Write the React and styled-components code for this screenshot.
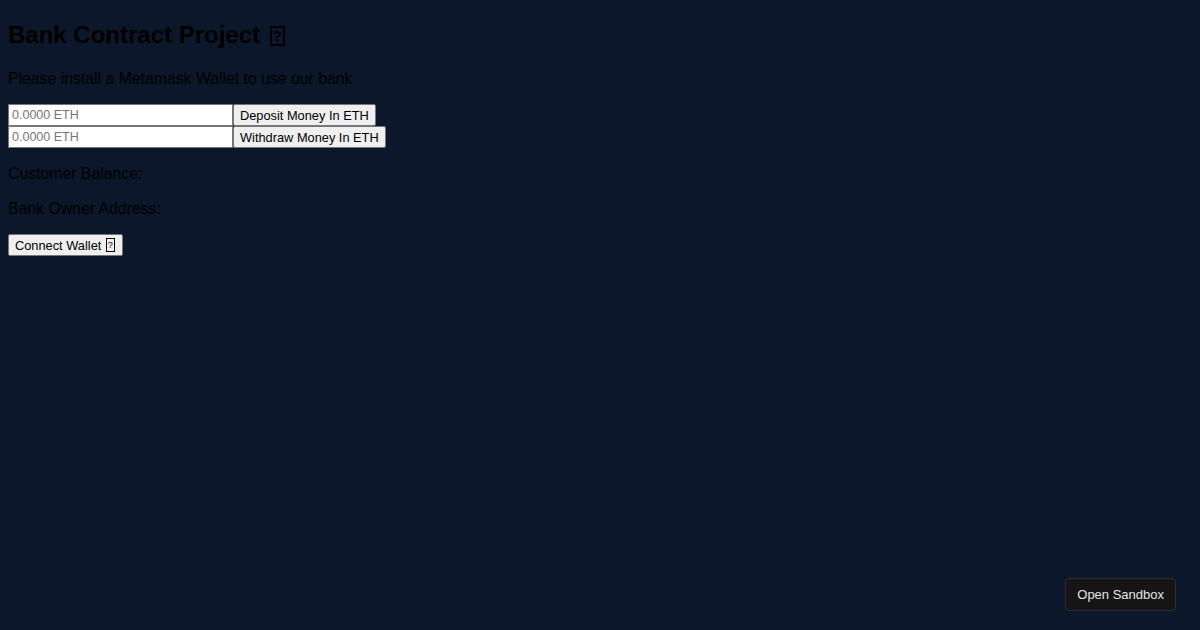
import React from 'react';
import styled, { createGlobalStyle } from 'styled-components';

const Global = createGlobalStyle`
  html, body {
    background: #0c172b;
  }
  body {
    margin: 0;
    padding: 0 8px;
    font-family: 'Liberation Sans', Arial, sans-serif;
    color: #000;
  }
`;

const Page = styled.div`
  padding-top: 1px;
`;

const Title = styled.h2`
  font-size: 24px;
  font-weight: bold;
  margin: 20px 0;
  line-height: 28px;
`;

const Text = styled.p`
  font-size: 15.8px;
  margin: 16px 0;
  line-height: 19px;
`;

const Row = styled.div`
  display: flex;
  align-items: stretch;
`;

// missing-glyph box, the emoji has no font in the shot
const Tofu = styled.span`
  display: inline-block;
  overflow: hidden;
  box-sizing: border-box;
  width: ${(p) => (p.$big ? 15 : 9)}px;
  height: ${(p) => (p.$big ? 20 : 14)}px;
  margin: 0 ${(p) => (p.$big ? 2 : 1)}px 0 ${(p) => (p.$big ? 3 : 1)}px;
  border: ${(p) => (p.$big ? 2 : 1)}px solid currentColor;
  font-size: ${(p) => (p.$big ? 14 : 9)}px;
  line-height: ${(p) => (p.$big ? 16 : 12)}px;
  text-align: center;
  vertical-align: ${(p) => (p.$big ? -3 : -2)}px;
`;

const Amount = styled.input`
  box-sizing: border-box;
  width: 225px;
  height: 22px;
  margin: 0;
  padding: 1px 3px;
  border: 1px solid #767676;
  background: #fff;
  font-family: 'Liberation Sans', Arial, sans-serif;
  font-size: 12.5px;
  color: #000;
  &::placeholder {
    color: #757575;
  }
`;

const Button = styled.button`
  margin: 0;
  height: 22px;
  padding: 1px 6px;
  border: 1px solid #767676;
  border-radius: 2px;
  background: #efefef;
  font-family: 'Liberation Sans', Arial, sans-serif;
  font-size: 12.8px;
  color: #000;
  cursor: pointer;
`;

const SandboxButton = styled.button`
  position: fixed;
  right: 24px;
  bottom: 19px;
  height: 33px;
  padding: 0 11px;
  background: #151515;
  border: 1px solid #2f2f2f;
  border-radius: 4px;
  color: #e5e5e5;
  font-family: 'Liberation Sans', Arial, sans-serif;
  font-size: 13px;
`;

export default function App() {
  return (
    <Page>
      <Global />
      <Title>
        Bank Contract Project <Tofu $big>?</Tofu>
      </Title>
      <Text>Please install a Metamask Wallet to use our bank</Text>
      <form onSubmit={(e) => e.preventDefault()}>
        <Row>
          <Amount type="text" placeholder="0.0000 ETH" />
          <Button>Deposit Money In ETH</Button>
        </Row>
        <Row>
          <Amount type="text" placeholder="0.0000 ETH" />
          <Button>Withdraw Money In ETH</Button>
        </Row>
      </form>
      <Text>Customer Balance: </Text>
      <Text>Bank Owner Address: </Text>
      <Button>
        Connect Wallet <Tofu>?</Tofu>
      </Button>
      <SandboxButton>Open Sandbox</SandboxButton>
    </Page>
  );
}
